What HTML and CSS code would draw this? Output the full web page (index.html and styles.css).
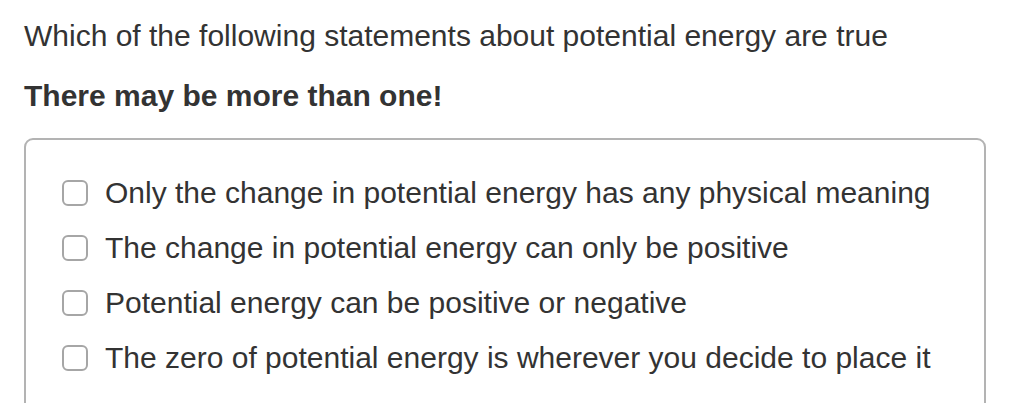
FILE: index.html
```html
<!DOCTYPE html>
<html lang="en">
  <head>
    <meta charset="UTF-8" />
    <title>Potential energy quiz</title>
    <link rel="stylesheet" href="styles.css">
  </head>
  <body>
    <div class="question">
      <p class="prompt">Which of the following statements about potential energy are true</p>
      <p class="hint">There may be more than one!</p>

      <fieldset class="choices">
        <label class="choice"><input type="checkbox" /><span class="box"></span>Only the change in potential energy has any physical meaning</label>
        <label class="choice"><input type="checkbox" /><span class="box"></span>The change in potential energy can only be positive</label>
        <label class="choice"><input type="checkbox" /><span class="box"></span>Potential energy can be positive or negative</label>
        <label class="choice"><input type="checkbox" /><span class="box"></span>The zero of potential energy is wherever you decide to place it</label>
      </fieldset>
    </div>
  </body>
</html>
```

FILE: styles.css
```css
:root {
  --text-color: #333333;
  --border-color: #b3b3b3;
  --box-color: #a6a6a6;
}

* {
  box-sizing: border-box;
}

body {
  margin: 0;
  padding: 0;
  background: #ffffff;
  font-family: "Liberation Sans", Arial, sans-serif;
  font-size: 30px;
  color: var(--text-color);
}

.question {
  padding: 18px 38px 0 24px;
}

.prompt {
  margin: 0;
  line-height: 36px;
}

.hint {
  margin: 24px 0 0;
  line-height: 36px;
  font-weight: bold;
}

.choices {
  margin: 24px 0 0;
  padding: 35px 36px 40px;
  border: 2px solid var(--border-color);
  border-radius: 9px;
  display: flex;
  flex-direction: column;
  gap: 19px;
}

.choice {
  display: flex;
  align-items: center;
  gap: 17px;
  line-height: 36px;
  cursor: pointer;
}

.choice input {
  display: none;
}

.box {
  width: 26px;
  height: 26px;
  flex: none;
  border: 2px solid var(--box-color);
  border-radius: 6px;
  background: #fff;
}
```
